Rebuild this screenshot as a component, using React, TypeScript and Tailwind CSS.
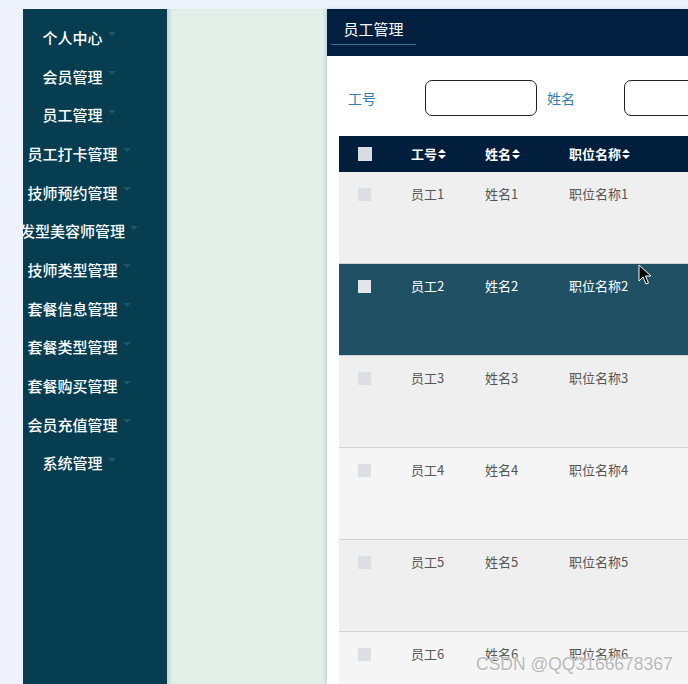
import React from "react";

const menus = [
  "个人中心",
  "会员管理",
  "员工管理",
  "员工打卡管理",
  "技师预约管理",
  "发型美容师管理",
  "技师类型管理",
  "套餐信息管理",
  "套餐类型管理",
  "套餐购买管理",
  "会员充值管理",
  "系统管理",
];

const rows = [1, 2, 3, 4, 5, 6];

function SortIcon() {
  return (
    <svg width="8" height="10" viewBox="0 0 8 10" className="ml-[1px] inline-block">
      <path d="M4 0 L8 4 L0 4 Z" fill="white" />
      <path d="M0 6 L8 6 L4 10 Z" fill="white" />
    </svg>
  );
}

export default function App() {
  const cjk = { fontFamily: '"Noto Sans CJK SC", "Noto Sans", sans-serif' };
  return (
    <div
      className="relative w-[688px] h-[684px] overflow-hidden bg-[#eef2fa] pt-[9px] pl-[23px] flex"
      style={cjk}
    >
      {/* Sidebar */}
      <div className="w-[144px] h-[675px] bg-[#073d51] overflow-hidden pt-[9px] shrink-0">
        <div className="w-[112px] flex flex-col">
          {menus.map((m) => (
            <div key={m} className="h-[38.7px] flex items-center justify-center whitespace-nowrap">
              <span className="text-white text-[15px] font-medium leading-none">{m}</span>
              <span className="ml-[5px] -mt-[6px] w-0 h-0 border-l-[4px] border-r-[4px] border-t-[4px] border-l-transparent border-r-transparent border-t-[#235468]" />
            </div>
          ))}
        </div>
      </div>

      {/* Green panel */}
      <div className="w-[160px] h-[675px] bg-[#e3f0ea] shrink-0 shadow-[inset_5px_0_5px_-3px_rgba(0,70,90,0.18)]" />

      {/* Main */}
      <div className="w-[361px] h-[675px] bg-white shrink-0 overflow-hidden shadow-[-2px_0_3px_rgba(120,160,220,0.35)]">
        <div className="h-[47px] bg-[#021f3f] pl-[4px] flex items-start">
          <div className="h-[36px] w-[85px] border-b border-[#3b6ea3] flex items-center justify-center">
            <span className="text-white text-[15px] leading-none pt-[3px]">员工管理</span>
          </div>
        </div>

        <div className="h-[80px] pt-[4px] flex items-center pl-[21px] w-[600px]">
          <span className="w-[77px] text-[14px] text-[#2f80b0]">工号</span>
          <div className="w-[112px] h-[36px] rounded-[7px] border border-[#222] mr-[10px]" />
          <span className="w-[77px] text-[14px] text-[#2f80b0]">姓名</span>
          <div className="w-[112px] h-[36px] rounded-[7px] border border-[#222]" />
        </div>

        <div className="ml-[12px] w-[500px]">
          <div className="h-[36px] bg-[#021e3d] flex items-center text-white text-[13px] font-bold">
            <div className="w-[72px] pl-[19px] flex items-center">
              <div className="w-[14px] h-[14px] bg-[#d9dde3]" />
            </div>
            <div className="w-[74px] flex items-center">工号<SortIcon /></div>
            <div className="w-[84px] flex items-center">姓名<SortIcon /></div>
            <div className="flex items-center">职位名称<SortIcon /></div>
          </div>
          {rows.map((r) => {
            const hi = r === 2;
            const bg = hi ? "bg-[#1f5064]" : r % 2 === 1 ? "bg-[#efefef]" : "bg-[#f5f5f5]";
            return (
              <div
                key={r}
                className={`h-[92px] border-b border-[#d2d2d2] flex items-start text-[13px] ${bg} ${hi ? "text-white" : "text-[#555]"}`}
              >
                <div className="w-[72px] pl-[19px] pt-[16px]">
                  <div className={`w-[13px] h-[13px] ${hi ? "bg-[#e2e6ea]" : "bg-[#dcdee3]"}`} />
                </div>
                <div className="w-[74px] pt-[12px] leading-[20px]">员工{r}</div>
                <div className="w-[84px] pt-[12px] leading-[20px]">姓名{r}</div>
                <div className="pt-[12px] leading-[20px]">职位名称{r}</div>
              </div>
            );
          })}
        </div>
      </div>

      {/* Mouse cursor */}
      <svg className="absolute left-[638px] top-[264px]" width="14" height="22" viewBox="0 0 14 22">
        <path d="M1 1 L1 17 L5 13 L8 20 L10.5 19 L7.5 12 L13 12 Z" fill="black" stroke="white" strokeWidth="1" />
      </svg>

      {/* Watermark */}
      <div
        className="absolute left-[476px] top-[652px] text-[17.5px] leading-[24px] text-[#b8b8b8] whitespace-nowrap"
        style={{ fontFamily: '"Liberation Sans", Arial, sans-serif', textShadow: "0 0 2px #fff, 0 0 1px #fff" }}
      >
        CSDN @QQ3166678367
      </div>
    </div>
  );
}
